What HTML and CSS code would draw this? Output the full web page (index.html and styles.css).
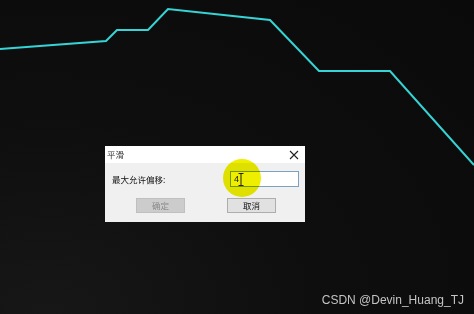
FILE: index.html
```html
<!DOCTYPE html>
<html>
<head>
<meta charset="utf-8">
<link rel="stylesheet" href="styles.css">
</head>
<body>
<div class="screen">
  <svg class="chart" width="474" height="314" viewBox="0 0 474 314">
    <polyline points="0,49 106,41 117,30 148,30 168,9 270,20 319,71 390,71 474,165" fill="none" stroke="#36d4d4" stroke-width="2"/>
  </svg>

  <div class="dialog">
    <div class="titlebar">
      <span class="title">平滑</span>
      <svg class="close" width="10" height="10" viewBox="0 0 10 10"><path d="M1 1L9 9M9 1L1 9" stroke="#222" stroke-width="1.1"/></svg>
    </div>
    <div class="body">
      <div class="row">
        <span class="label">最大允许偏移:</span>
        <div class="input"><span class="val">4</span></div>
      </div>
      <div class="buttons">
        <button class="btn disabled">确定</button>
        <button class="btn">取消</button>
      </div>
    </div>
    <div class="highlight"></div>
    <svg class="ibeam" width="6" height="13" viewBox="0 0 6 13"><path d="M0.5 0.5H5.5M3 0.5V12.5M0.5 12.5H5.5" stroke="#222" stroke-width="1"/></svg>
  </div>

  <div class="watermark">CSDN @Devin_Huang_TJ</div>
</div>
</body>
</html>
```

FILE: styles.css
```css
html, body {
  margin: 0;
  padding: 0;
  background: #0c0c0c;
}
.screen {
  position: relative;
  width: 474px;
  height: 314px;
  overflow: hidden;
  background: radial-gradient(ellipse at 10% 100%, #171717 0%, #0e0e0e 45%, #0a0a0a 100%);
  font-family: "Noto Sans CJK SC", "Liberation Sans", sans-serif;
}
.chart {
  position: absolute;
  left: 0;
  top: 0;
}
.dialog {
  position: absolute;
  left: 105px;
  top: 146px;
  width: 200px;
  height: 76px;
  background: #f0f0f0;
  display: flex;
  flex-direction: column;
}
.titlebar {
  height: 17px;
  background: #ffffff;
  display: flex;
  align-items: center;
  justify-content: space-between;
  padding: 0 6px 0 2px;
}
.title {
  font-size: 8.5px;
  color: #333;
  line-height: 1;
}
.close {
  display: block;
  margin-top: 1px;
}
.body {
  flex: 1;
  display: flex;
  flex-direction: column;
  padding: 8px 6px 0 7px;
}
.row {
  display: flex;
  align-items: center;
  justify-content: space-between;
  height: 16px;
}
.label {
  font-size: 8.5px;
  color: #111;
  line-height: 1;
}
.input {
  width: 64px;
  height: 14px;
  border: 1px solid #7aa3c2;
  background: #fff;
  display: flex;
  align-items: center;
  padding-left: 3px;
  box-sizing: content-box;
}
.val {
  font-size: 9px;
  color: #222;
  font-family: "Liberation Sans", sans-serif;
  line-height: 1;
}
.buttons {
  display: flex;
  gap: 42px;
  margin-top: 11px;
  padding-left: 24px;
}
.btn {
  width: 49px;
  height: 15px;
  margin: 0;
  padding: 0;
  border: 1px solid #adadad;
  background: #e1e1e1;
  font-family: "Noto Sans CJK SC", sans-serif;
  font-size: 8.5px;
  color: #111;
  line-height: 1;
}
.btn.disabled {
  border-color: #bfbfbf;
  background: #cccccc;
  color: #8a8a8a;
}
.highlight {
  position: absolute;
  left: 118px;
  top: 13px;
  width: 38px;
  height: 38px;
  border-radius: 50%;
  background: #eeee00;
  mix-blend-mode: multiply;
}
.ibeam {
  position: absolute;
  left: 133px;
  top: 27px;
  display: block;
}
.watermark {
  position: absolute;
  right: 10px;
  top: 292px;
  font-family: "Liberation Sans", sans-serif;
  font-size: 12px;
  color: #c4c4c4;
  line-height: 16px;
}
```
